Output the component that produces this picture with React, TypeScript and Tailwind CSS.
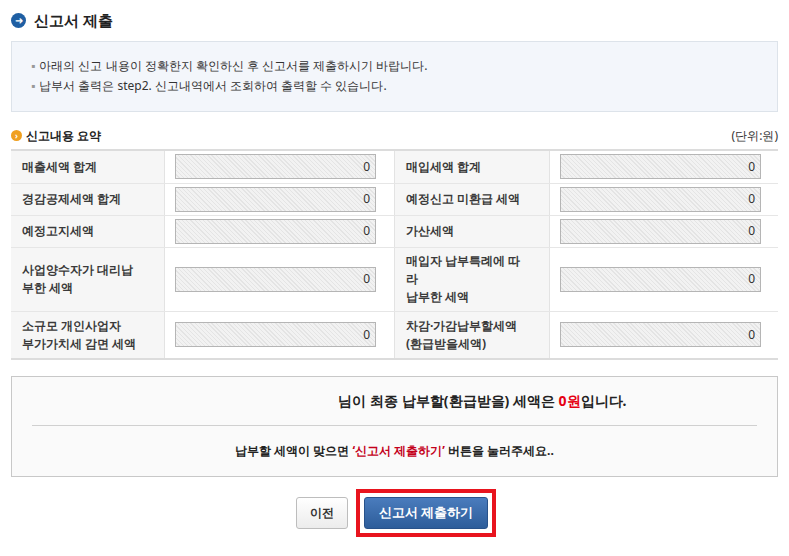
const font = "font-['Dotum','Noto_Sans_CJK_KR',sans-serif]";

function Amount() {
  return (
    <div className="h-[25px] w-[201px] border border-[#b5b5b5] bg-[repeating-linear-gradient(45deg,#f2f2f2_0px,#f2f2f2_2px,#e4e4e4_2px,#e4e4e4_3px)] flex items-center justify-end pr-[5px] text-[12px] text-[#333]">
      0
    </div>
  );
}

function Label({ children }: { children: React.ReactNode }) {
  return (
    <div className="bg-[#f6f6f6] border-r border-[#e3e3e3] px-[11px] flex items-center text-[12px] font-bold text-[#3a3a3a] leading-[18px]">
      <div>{children}</div>
    </div>
  );
}

function Cell() {
  return (
    <div className="flex items-center px-[10px] border-r border-[#e3e3e3] last:border-r-0">
      <Amount />
    </div>
  );
}

const rows: [React.ReactNode, React.ReactNode, string][] = [
  ["매출세액 합계", "매입세액 합계", "h-[32px]"],
  ["경감공제세액 합계", "예정신고 미환급 세액", "h-[32px]"],
  ["예정고지세액", "가산세액", "h-[32px]"],
  [<>사업양수자가 대리납<br />부한 세액</>, <>매입자 납부특례에 따<br />라<br />납부한 세액</>, "h-[64px]"],
  [<>소규모 개인사업자<br />부가가치세 감면 세액</>, <>차감·가감납부할세액<br />(환급받을세액)</>, "h-[47px]"],
];

export default function App() {
  return (
    <div className={`${font} w-[789px] h-[556px] bg-white px-[11px] pt-[9px] text-[#333]`}>
      <div className="flex items-center gap-[8px]">
        <span className="w-[15px] h-[15px] rounded-full bg-[#1f5fa3] text-white flex items-center justify-center text-[10px] leading-none">➜</span>
        <h1 className="text-[15px] font-bold text-[#222]">신고서 제출</h1>
      </div>

      <div className="mt-[9px] h-[71px] bg-[#f3f6fb] border border-[#dde3ea] px-[19px] flex flex-col justify-center gap-[2px] text-[12px] text-[#333]">
        <p><span className="text-[#999] mr-[4px]">▪</span>아래의 신고 내용이 정확한지 확인하신 후 신고서를 제출하시기 바랍니다.</p>
        <p><span className="text-[#999] mr-[4px]">▪</span>납부서 출력은 step2. 신고내역에서 조회하여 출력할 수 있습니다.</p>
      </div>

      <div className="mt-[15px] flex items-center justify-between">
        <div className="flex items-center gap-[4px]">
          <span className="w-[11px] h-[11px] rounded-full bg-[#f0a020] text-white flex items-center justify-center text-[8px] leading-none font-bold">›</span>
          <h2 className="text-[12px] font-bold text-[#222]">신고내용 요약</h2>
        </div>
        <span className="text-[12px] text-[#333]">(단위:원)</span>
      </div>

      <div className="mt-[4px] border-t-2 border-b-2 border-[#dcdcdc]">
        {rows.map(([a, b, h], i) => (
          <div key={i} className={`grid grid-cols-[154px_230px_155px_229px] ${h} ${i > 0 ? "border-t border-[#e6e6e6]" : ""}`}>
            <Label>{a}</Label>
            <Cell />
            <Label>{b}</Label>
            <Cell />
          </div>
        ))}
      </div>

      <div className="mt-[16px] h-[101px] border border-[#c8c8c8] bg-[#fafafa] px-[20px] flex flex-col">
        <div className="h-[48px] flex items-center justify-center text-[14px] font-bold text-[#222] pl-[176px]">
          님이 최종 납부할(환급받을) 세액은&nbsp;<span className="text-[#e60012]">0원</span>입니다.
        </div>
        <div className="border-t border-[#d0d0d0] flex-1 flex items-center justify-center text-[12px] font-bold text-[#222]">
          납부할 세액이 맞으면&nbsp;<span className="text-[#c4001a]">‘신고서 제출하기’</span>&nbsp;버튼을 눌러주세요..
        </div>
      </div>

      <div className="mt-[12px] flex items-center justify-center gap-[8px] pl-[3px]">
        <button className="h-[32px] px-[13px] border border-[#bdbdbd] rounded-[3px] bg-gradient-to-b from-white to-[#ececec] text-[12px] font-bold text-[#333]">이전</button>
        <div className="border-[4px] border-[#e8141e] p-[4px]">
          <button className="h-[32px] w-[124px] rounded-[3px] bg-gradient-to-b from-[#4a7cbd] to-[#2d5d9a] border border-[#28528a] text-[13px] font-bold text-white">신고서 제출하기</button>
        </div>
      </div>
    </div>
  );
}
